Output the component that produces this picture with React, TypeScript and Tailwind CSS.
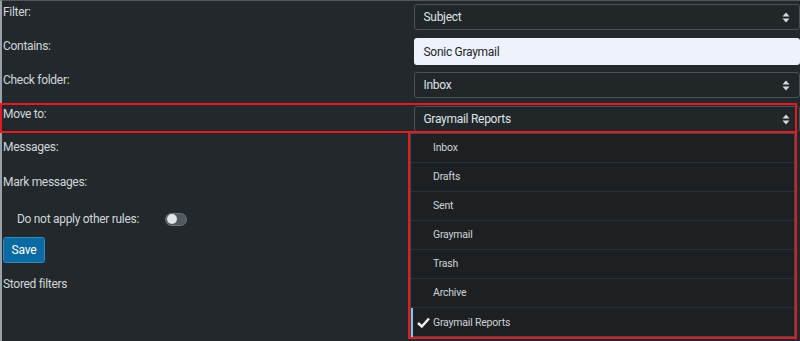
import React from "react";

const Arrows = () => (
  <svg width="8" height="11" viewBox="0 0 8 11" className="shrink-0">
    <path d="M4 0.5 L7.5 4.5 L0.5 4.5 Z" fill="#d6dadd" />
    <path d="M4 10.5 L7.5 6.5 L0.5 6.5 Z" fill="#d6dadd" />
  </svg>
);

const Select = ({ value }: { value: string }) => (
  <div className="flex h-[26px] w-[386px] items-center justify-between rounded-[3px] border border-[#4a5258] bg-[#212629] pl-[8px] pr-[9px] text-[12px] tracking-[-0.28px] text-[#dfe3e6]">
    <span>{value}</span>
    <Arrows />
  </div>
);

const labelCls = "text-[12px] leading-[16px] tracking-[-0.3px] text-[#d3d7da]";

const Row = ({ label, children }: { label: string; children?: React.ReactNode }) => (
  <div className="flex h-[26px] items-start">
    <div className={`w-[413px] pl-[1px] ${labelCls}`}>{label}</div>
    {children}
  </div>
);

const items = ["Inbox", "Drafts", "Sent", "Graymail", "Trash", "Archive", "Graymail Reports"];

export default function App() {
  return (
    <div
      className="relative h-[341px] w-[800px] overflow-hidden bg-[#22282c]"
      style={{ fontFamily: "Roboto, 'Liberation Sans', sans-serif" }}
    >
      <div className="flex h-full flex-col border-l-2 border-t border-l-[#9aa1a6] border-t-[#50575c] pt-[3px]">
        <div className="flex flex-col gap-[8px]">
          <Row label="Filter:">
            <Select value="Subject" />
          </Row>
          <Row label="Contains:">
            <div className="flex h-[27px] w-[386px] items-center rounded-[3px] bg-[#eef3fb] pl-[9px] text-[12px] tracking-[-0.28px] text-[#212529]">
              Sonic Graymail
            </div>
          </Row>
          <Row label="Check folder:">
            <Select value="Inbox" />
          </Row>
          <Row label="Move to:">
            <Select value="Graymail Reports" />
          </Row>
        </div>
        <div className={`mt-[7px] pl-[1px] ${labelCls}`}>Messages:</div>
        <div className={`mt-[19px] pl-[1px] ${labelCls}`}>Mark messages:</div>
        <div className="mt-[21px] flex h-[16px] items-center pl-[15px]">
          <span className={`w-[148px] ${labelCls}`}>Do not apply other rules:</span>
          <span className="flex h-[13px] w-[22px] items-center rounded-full border border-[#6d767c] bg-[#525a60] pl-[1px]">
            <span className="h-[10px] w-[10px] rounded-full bg-[#e3e6e8]" />
          </span>
        </div>
        <div className="mt-[10px] pl-[1px]">
          <button className="h-[26px] w-[42px] rounded-[3px] border border-[#2a8cc4] bg-[#0b6aa2] text-[12px] tracking-[-0.2px] text-white">
            Save
          </button>
        </div>
        <div className={`mt-[13px] pl-[1px] ${labelCls}`}>Stored filters</div>
      </div>

      {/* red annotation around Move to row */}
      <div className="pointer-events-none absolute left-0 top-[103px] h-[30px] w-[797px] border-2 border-[#e01b22]" />

      {/* dropdown menu */}
      <div className="absolute left-[408px] top-[131px] h-[208px] w-[389px] border-2 border-[#e01b22]">
        <div className="flex h-full flex-col border border-[#40474d] bg-[#1c2023]">
          {items.map((it, i) => {
            const sel = i === items.length - 1;
            return (
              <div
                key={it}
                className={`flex h-[29px] shrink-0 items-center text-[10.5px] tracking-[-0.2px] text-[#cfd3d6] ${
                  i < items.length - 1 ? "border-b border-[#2b3136]" : ""
                } ${sel ? "border-l-2 border-l-[#8cc3df]" : "pl-[2px]"}`}
              >
                <span className="flex w-[20px] justify-center">
                  {sel && (
                    <svg width="13" height="11" viewBox="0 0 13 11">
                      <path d="M1 6 L4.8 9.5 L12 1.5" stroke="#eef0f2" strokeWidth="2.4" fill="none" />
                    </svg>
                  )}
                </span>
                <span>{it}</span>
              </div>
            );
          })}
        </div>
      </div>
    </div>
  );
}
